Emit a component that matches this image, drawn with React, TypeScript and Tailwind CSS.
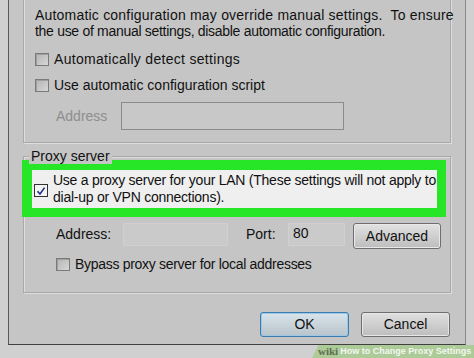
function Box({ checked = false, className = "" }: { checked?: boolean; className?: string }) {
  if (checked) {
    return (
      <span className={`flex h-[13px] w-[14px] shrink-0 items-center justify-center border border-[#333] bg-[#f4f4f4] ${className}`}>
        <svg viewBox="0 0 10 10" className="h-[10px] w-[10px]">
          <path d="M1.5 5.2 L4 8 L8.6 1.6" fill="none" stroke="#1c2f8a" strokeWidth="1.6" />
        </svg>
      </span>
    );
  }
  return (
    <span
      className={`block h-[13px] w-[14px] shrink-0 border border-[#7a7a7a] bg-gradient-to-br from-[#b5b5b5] to-[#d6d6d6] shadow-[inset_1px_1px_0_#a0a0a0] ${className}`}
    />
  );
}

const groupBox = "border border-[#a9a9a9] shadow-[inset_1px_1px_0_#dedede,1px_1px_0_#dedede]";

export default function App() {
  return (
    <div
      className="relative h-[358px] w-[474px] overflow-hidden bg-[#d0d0d0] text-[14px] text-[#111]"
      style={{ fontFamily: '"Liberation Sans", Arial, sans-serif' }}
    >
      <div className="ml-[8px] h-[353px] w-[458px] border-b border-l border-r border-b-[#404040] border-l-[#5a5a5a] border-r-[#8a8a8a] bg-[#c5c5c5] pl-[14px] pr-[14px]">
        {/* automatic configuration */}
        <div className={`-mt-[8px] h-[151px] pl-[11px] pt-[14px] ${groupBox}`}>
          <p className="whitespace-nowrap leading-[16px]">
            <span className="tracking-[0.2px]">Automatic configuration may override manual settings.&nbsp; To ensure</span>
            <br />
            <span className="tracking-[-0.3px]">the use of manual settings, disable automatic configuration.</span>
          </p>
          <label className="mt-[12px] flex h-[16px] items-center gap-[5px]">
            <Box />
            <span className="tracking-[0.3px]">Automatically detect settings</span>
          </label>
          <label className="mt-[10px] flex h-[16px] items-center gap-[5px]">
            <Box />
            <span>Use automatic configuration script</span>
          </label>
          <div className="mt-[9px] flex items-center">
            <span className="w-[86px] pl-[21px] text-[#8e8e8e]">Address</span>
            <span className="block h-[28px] w-[223px] border border-[#8c8c8c] bg-[#c8c8c8]" />
          </div>
        </div>

        {/* proxy server */}
        <div className={`relative mt-[13px] h-[137px] ${groupBox}`}>
          <span className="absolute -top-[9px] left-[5px] bg-[#c5c5c5] px-[2px] leading-[16px]">Proxy server</span>
          <div className="-ml-[2px] mr-[4px] mt-[3px] border-[9px] border-l-[10px] border-t-[10px] border-[#27e627] bg-[#efefef]">
            <div className="flex items-start gap-[5px] py-[2px] pl-[2px]">
              <Box checked className="mt-[12px]" />
              <p className="whitespace-nowrap leading-[17px] tracking-[-0.25px]">
                Use a proxy server for your LAN (These settings will not apply to
                <br />
                dial-up or VPN connections).
              </p>
            </div>
          </div>
          <div className="mt-[3px] flex items-center">
            <span className="w-[99px] pl-[32px]">Address:</span>
            <span className="block h-[23px] w-[105px] border border-[#d0d0d0] bg-[#cacaca]" />
            <span className="w-[60px] pl-[18px]">Port:</span>
            <span className="flex h-[23px] w-[57px] items-start border border-[#d0d0d0] bg-[#cacaca] pl-[4px] leading-[18px]">80</span>
            <button className="ml-[8px] mt-[3px] h-[26px] w-[88px] rounded-[3px] border border-[#6f6f6f] bg-gradient-to-b from-[#e2e2e2] to-[#bdbdbd] shadow-[inset_0_0_0_1px_#e8e8e8]">
              Advanced
            </button>
          </div>
          <label className="ml-[32px] mt-[7px] flex h-[16px] items-center gap-[5px]">
            <Box />
            <span className="tracking-[-0.3px]">Bypass proxy server for local addresses</span>
          </label>
        </div>

        {/* buttons */}
        <div className="mt-[19px] flex justify-end gap-[12px] pr-[1px]">
          <button className="h-[25px] w-[89px] rounded-[3px] border border-[#3a7bb0] bg-gradient-to-b from-[#d8e4ec] to-[#b9c3ca] shadow-[inset_0_0_0_1px_#9cc8e6]">
            OK
          </button>
          <button className="h-[25px] w-[89px] rounded-[3px] border border-[#6f6f6f] bg-gradient-to-b from-[#e0e0e0] to-[#bdbdbd] shadow-[inset_0_0_0_1px_#e6e6e6]">
            Cancel
          </button>
        </div>
      </div>

      {/* watermark */}
      <div className="absolute bottom-0 right-0 flex h-[13px] w-[162px] items-center gap-[2px] whitespace-nowrap bg-[#a8c992]/90 pl-[6px] leading-none [clip-path:polygon(4%_0,100%_0,100%_100%,0_100%)]">
        <span className="text-[11px] font-bold text-[#5d6e52]" style={{ fontFamily: '"Liberation Serif", serif' }}>wiki</span>
        <span className="text-[9px] font-bold text-[#f3f7ef]">How to Change Proxy Settings</span>
      </div>
    </div>
  );
}
